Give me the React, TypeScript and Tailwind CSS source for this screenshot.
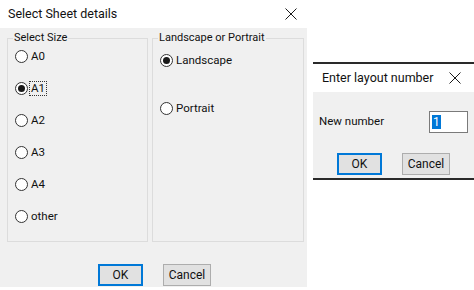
import type { ReactNode } from 'react';

const font = { fontFamily: 'Roboto, "Noto Sans", sans-serif' };

function CloseIcon() {
  return (
    <svg width="12" height="12" viewBox="0 0 12 12" aria-hidden="true">
      <path d="M0.5 0.5 L11.5 11.5 M11.5 0.5 L0.5 11.5" stroke="#1a1a1a" strokeWidth="1" fill="none" />
    </svg>
  );
}

type RadioProps = {
  label: string;
  checked?: boolean;
  focused?: boolean;
};

function Radio({ label, checked = false, focused = false }: RadioProps) {
  return (
    <div className="flex h-[16px] items-center">
      <span className="flex size-[13px] shrink-0 items-center justify-center rounded-full border border-[#333] bg-white">
        {checked && <span className="size-[7px] rounded-full bg-[#1a1a1a]" />}
      </span>
      <span
        className={
          focused
            ? 'ml-px border border-dotted border-[#333] px-px text-[11.5px] leading-[13px] text-[#111]'
            : 'ml-[3px] text-[11.5px] leading-[13px] text-[#111]'
        }
      >
        {label}
      </span>
    </div>
  );
}

function GroupBox({ title, className, children }: { title: string; className: string; children: ReactNode }) {
  return (
    <fieldset className={`border border-[#dcdcdc] ${className}`}>
      <legend className="ml-[5px] px-px text-[11px] leading-[14px] text-[#111]">{title}</legend>
      {children}
    </fieldset>
  );
}

function Button({ label, primary = false, className = '' }: { label: string; primary?: boolean; className?: string }) {
  return (
    <button
      className={`flex h-[22px] items-center justify-center bg-[#e1e1e1] text-[12px] text-[#111] ${
        primary ? 'border-2 border-[#0078d7]' : 'border border-[#adadad]'
      } ${className}`}
      type="button"
    >
      {label}
    </button>
  );
}

export default function App() {
  return (
    <div className="flex h-[290px] w-[474px] items-start bg-white" style={font}>
      {/* Select Sheet details */}
      <div className="flex h-[287px] w-[307px] flex-col bg-[#f0f0f0]">
        <div className="flex h-[28px] items-center justify-between bg-white pl-[8px] pr-[10px]">
          <span className="text-[12.5px] text-[#111]">Select Sheet details</span>
          <CloseIcon />
        </div>

        <div className="flex gap-[4px] pl-[7px] pt-[3px]">
          <GroupBox className="h-[211px] w-[141px]" title="Select Size">
            <div className="flex flex-col gap-[16px] pl-[7px] pt-[3px]">
              <Radio label="A0" />
              <Radio checked focused label="A1" />
              <Radio label="A2" />
              <Radio label="A3" />
              <Radio label="A4" />
              <Radio label="other" />
            </div>
          </GroupBox>

          <GroupBox className="h-[211px] w-[152px]" title="Landscape or Portrait">
            <div className="flex flex-col gap-[32px] pl-[7px] pt-[7px]">
              <Radio checked label="Landscape" />
              <Radio label="Portrait" />
            </div>
          </GroupBox>
        </div>

        <div className="flex gap-[20px] pl-[98px] pt-[22px]">
          <Button className="w-[45px]" label="OK" primary />
          <Button className="w-[48px]" label="Cancel" />
        </div>
      </div>

      {/* Enter layout number */}
      <div className="ml-[6px] mt-[62px] flex h-[118px] w-[161px] flex-col border-b-2 border-t-2 border-[#2a2a2a] bg-[#f0f0f0]">
        <div className="flex h-[28px] items-center justify-between bg-white pl-[9px] pr-[13px]">
          <span className="text-[12.5px] text-[#111]">Enter layout number</span>
          <CloseIcon />
        </div>

        <div className="flex items-center justify-between pl-[6px] pr-[6px] pt-[19px]">
          <span className="text-[11.5px] text-[#111]">New number</span>
          <div className="flex h-[22px] w-[39px] items-center border border-[#7a7a7a] bg-white pl-[2px]">
            <span className="bg-[#0078d7] px-px text-[12px] leading-[14px] text-white">1</span>
          </div>
        </div>

        <div className="flex gap-[20px] pl-[24px] pt-[20px]">
          <Button className="w-[45px]" label="OK" primary />
          <Button className="w-[48px]" label="Cancel" />
        </div>
      </div>
    </div>
  );
}
